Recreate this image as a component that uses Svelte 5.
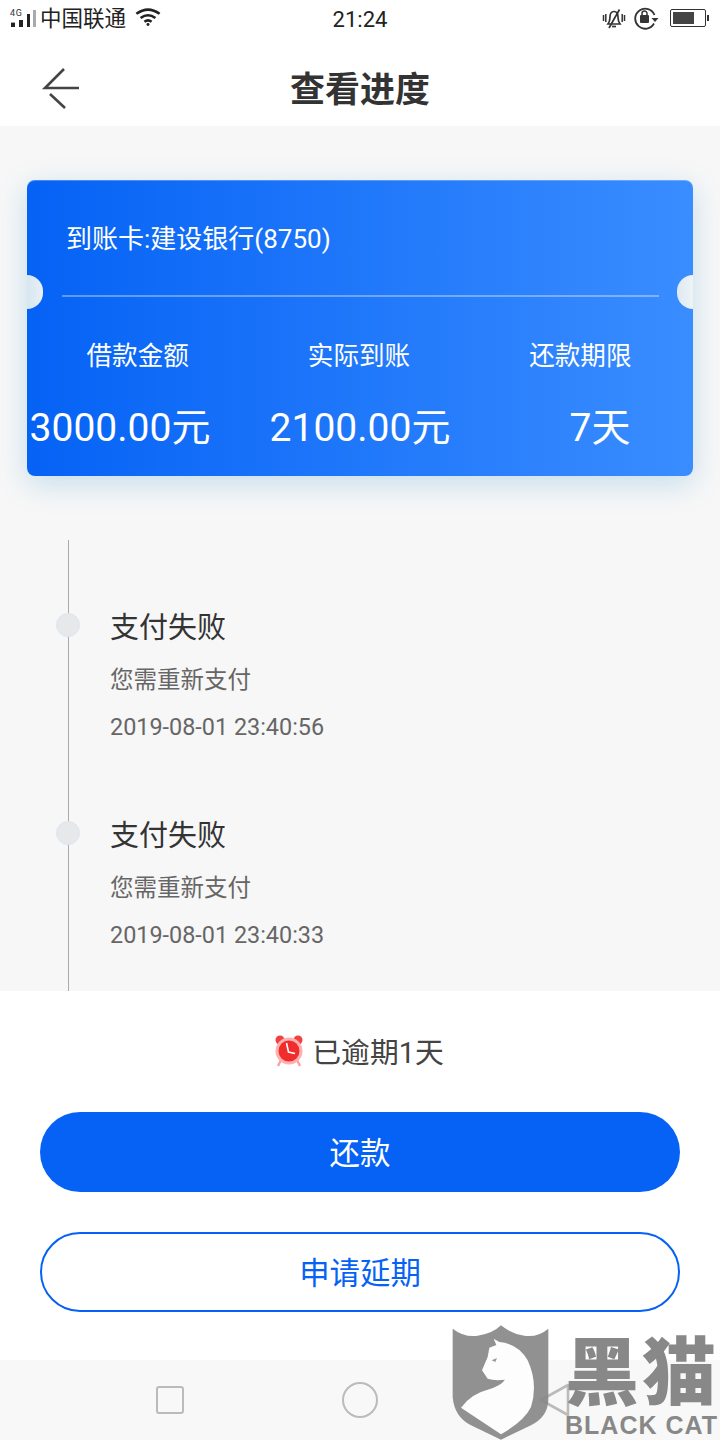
<script lang="ts">
	const stats = [
		{ label: '借款金额', value: '3000.00元' },
		{ label: '实际到账', value: '2100.00元' },
		{ label: '还款期限', value: '7天' }
	];
	const records = [
		{ title: '支付失败', note: '您需重新支付', time: '2019-08-01 23:40:56' },
		{ title: '支付失败', note: '您需重新支付', time: '2019-08-01 23:40:33' }
	];
</script>

<div class="page">
	<div class="status-bar">
		<div class="status-left">
			<svg class="signal" width="30" height="24" viewBox="0 0 30 24">
				<text x="0" y="9" font-size="9" letter-spacing="0.8" font-family="Roboto, sans-serif" fill="#333">4G</text>
				<rect x="1" y="15.6" width="4" height="4.4" fill="#222" />
				<rect x="9" y="13" width="4" height="7" fill="#222" />
				<rect x="17" y="7" width="3" height="13" fill="#222" />
				<rect x="23" y="3" width="3" height="17" fill="#aaa" />
			</svg>
			<span class="carrier">中国联通</span>
			<svg class="wifi" width="26" height="19" viewBox="0 0 24 18" fill="none" stroke="#222" stroke-width="2.5">
				<path d="M1 5.5 Q12 -2.5 23 5.5" />
				<path d="M5 9.5 Q12 4.2 19 9.5" />
				<path d="M8.6 13 Q12 10.6 15.4 13" />
				<circle cx="12" cy="15.6" r="1.4" fill="#222" stroke="none" />
			</svg>
		</div>
		<span class="clock">21:24</span>
		<div class="status-right">
			<svg width="24" height="22" viewBox="0 0 24 22" fill="none" stroke="#333" stroke-width="1.7">
				<path d="M6 16 Q8 13 8 9 Q8 3.5 12 3.5 Q16 3.5 16 9 Q16 13 18 16 Z" />
				<path d="M10 18.5 H14" />
				<path d="M17.5 1.5 L7 20" />
				<path d="M1.5 7 V13 M3.8 6 V14 M20.2 6 V14 M22.5 7 V13" stroke-width="1.5" />
			</svg>
			<svg width="26" height="24" viewBox="0 0 26 24" fill="none">
				<path d="M20.5 8 A10 10 0 1 0 20 16.5" stroke="#333" stroke-width="1.8" />
				<path d="M17.5 11 H24.5 L21 15 Z" fill="#333" />
				<rect x="6" y="8" width="9" height="8" rx="1" fill="#333" />
				<path d="M8 8 V6.5 A2.5 2.5 0 0 1 13 6.5 V8" stroke="#333" stroke-width="1.5" />
			</svg>
			<div class="battery">
				<div class="battery-shell"><div class="battery-fill"></div></div>
				<div class="battery-nub"></div>
			</div>
		</div>
	</div>

	<header class="top-bar">
		<svg class="back" width="40" height="44" viewBox="0 0 40 44" fill="none" stroke="#444" stroke-width="2.6">
			<path d="M23 2 L4 21 H38" />
			<path d="M9 27 L24 41" />
		</svg>
		<h1>查看进度</h1>
	</header>

	<main class="content">
		<section class="card">
			<div class="notch notch-left"></div>
			<div class="notch notch-right"></div>
			<div class="card-top">到账卡:建设银行(8750)</div>
			<div class="card-line"></div>
			<div class="label-row">
				{#each stats as s}
					<span>{s.label}</span>
				{/each}
			</div>
			<div class="value-row">
				{#each stats as s}
					<span>{s.value}</span>
				{/each}
			</div>
		</section>

		<section class="timeline">
			{#each records as r}
				<div class="record">
					<div class="dot"></div>
					<div class="record-title">{r.title}</div>
					<div class="record-note">{r.note}</div>
					<div class="record-time">{r.time}</div>
				</div>
			{/each}
		</section>
	</main>

	<footer class="actions">
		<div class="overdue">
			<svg width="30" height="32" viewBox="0 0 30 32">
				<circle cx="6" cy="5" r="4.5" fill="#f04040" />
				<circle cx="24" cy="5" r="4.5" fill="#f04040" />
				<path d="M7 25 L4 31 M23 25 L26 31" stroke="#ffa0a0" stroke-width="2.4" />
				<circle cx="15" cy="16" r="13.5" fill="#ffb0b0" />
				<circle cx="15" cy="16" r="10.5" fill="#f02c2c" />
				<path d="M12.5 8 L14.5 17 L21 18.5" fill="none" stroke="#fff" stroke-width="1.6" />
			</svg>
			<span>已逾期1天</span>
		</div>
		<button class="btn btn-solid">还款</button>
		<button class="btn btn-line">申请延期</button>
	</footer>

	<nav class="nav-bar">
		<div class="nav-square"></div>
		<div class="nav-circle"></div>
		<svg width="34" height="38" viewBox="0 0 34 38" fill="none">
			<path d="M3 19 L30 4 V34 Z" stroke="#bbb" stroke-width="2.6" stroke-linejoin="round" />
		</svg>
	</nav>

	<div class="watermark">
		<svg class="wm-shield" width="100" height="116" viewBox="65 44 290 348">
			<path
				d="M65 55 Q100 82 140 76 Q185 70 210 45 Q240 70 280 76 Q320 82 352 55 L352 270 Q350 320 300 345 L210 388 L120 345 Q70 320 65 260 Z"
				fill="#888"
				fill-opacity="0.92"
			/>
			<path
				d="M188 85 L205 95 Q262 100 290 150 Q322 220 300 290 Q280 332 210 372 L90 292 Q120 250 170 238 Q210 226 222 208 Q190 212 170 205 L153 180 L170 140 L175 112 L196 104 Z"
				fill="#fdfdfd"
			/>
			<path d="M182 150 L198 143 L193 155 Z" fill="#999" />
		</svg>
		<div class="wm-text">
			<div class="wm-cn">黑猫</div>
			<div class="wm-en">BLACK CAT</div>
		</div>
	</div>
</div>

<style>
	:global(body) {
		margin: 0;
		background: #fff;
	}

	.page {
		position: relative;
		width: 720px;
		height: 1440px;
		overflow: hidden;
		display: flex;
		flex-direction: column;
		font-family: Roboto, 'Noto Sans CJK SC', sans-serif;
		color: #333;
	}

	.status-bar {
		height: 38px;
		display: grid;
		grid-template-columns: 1fr auto 1fr;
		align-items: center;
		flex-shrink: 0;
	}

	.status-left {
		display: flex;
		align-items: center;
		padding-left: 10px;
	}

	.carrier {
		font-size: 21.5px;
		line-height: 38px;
		color: #222;
	}

	.wifi {
		margin-left: 9px;
		margin-top: -3px;
	}

	.clock {
		font-size: 22px;
		color: #222;
	}

	.status-right {
		display: flex;
		align-items: center;
		justify-content: flex-end;
		padding-right: 11px;
		gap: 8px;
	}

	.battery {
		display: flex;
		align-items: center;
		margin-left: 2px;
		margin-top: -2px;
	}

	.battery-shell {
		width: 36px;
		height: 18px;
		box-sizing: border-box;
		border: 1.5px solid #333;
		border-radius: 2px;
		padding: 2px;
	}

	.battery-fill {
		width: 21px;
		height: 100%;
		background: #444;
	}

	.battery-nub {
		width: 2px;
		height: 6px;
		background: #333;
		margin-left: 1px;
	}

	.top-bar {
		height: 88px;
		flex-shrink: 0;
		background: #fff;
		display: flex;
		align-items: center;
		justify-content: center;
		position: relative;
	}

	.back {
		position: absolute;
		left: 41px;
		top: 29px;
	}

	h1 {
		margin: 16px 0 0;
		font-size: 35px;
		font-weight: 700;
		color: #333;
		line-height: 1;
	}

	.content {
		flex: 1;
		min-height: 0;
		background: #f7f7f7;
		padding-top: 54px;
		display: flex;
		flex-direction: column;
		overflow: hidden;
	}

	.card {
		position: relative;
		margin: 0 27px;
		height: 296px;
		box-sizing: border-box;
		border-radius: 8px;
		background: linear-gradient(90deg, #0562f5 0%, #3a8dff 100%);
		box-shadow: inset 0 1px rgba(255, 255, 255, 0.25), 0 8px 30px rgba(20, 130, 200, 0.22);
		color: #fff;
		flex-shrink: 0;
	}

	.notch {
		position: absolute;
		top: 95px;
		width: 16px;
		height: 34px;
	}

	.notch-left {
		left: 0;
		border-radius: 0 17px 17px 0;
		background: linear-gradient(90deg, #d6e6f2, #e9f0f5);
	}

	.notch-right {
		right: 0;
		border-radius: 17px 0 0 17px;
		background: linear-gradient(90deg, #dceaf3, #eff3f5);
	}

	.card-top {
		height: 115px;
		box-sizing: border-box;
		padding: 40px 39px 0;
		font-size: 26px;
		line-height: 38px;
	}

	.card-line {
		height: 2px;
		margin: 0 34px 0 35px;
		background: rgba(255, 255, 255, 0.35);
	}

	.label-row {
		display: grid;
		grid-template-columns: repeat(3, 1fr);
		margin: 40px 2px 0 0;
		font-size: 25.6px;
		line-height: 38px;
		text-align: center;
	}

	.value-row {
		display: grid;
		grid-template-columns: repeat(3, 1fr);
		margin: 28px -27px 0;
		font-size: 39px;
		line-height: 50px;
		text-align: center;
	}

	.timeline {
		flex: 1;
		margin: 64px 0 0 68px;
		border-left: 1px solid #aaa;
	}

	.record {
		position: relative;
		padding: 68px 0 0 41px;
	}

	.record + .record {
		padding-top: 72px;
	}

	.dot {
		position: absolute;
		left: -13px;
		top: 73px;
		width: 24px;
		height: 24px;
		box-sizing: border-box;
		border-radius: 50%;
		background: #e7e8ea;
		border: 1px solid #dce5f2;
	}

	.record + .record .dot {
		top: 77px;
	}

	.record-title {
		font-size: 29px;
		line-height: 40px;
		color: #333;
	}

	.record-note {
		margin-top: 15px;
		font-size: 23.5px;
		line-height: 34px;
		color: #666;
	}

	.record-time {
		margin-top: 13px;
		font-size: 23.4px;
		line-height: 34px;
		color: #666;
	}

	.actions {
		height: 369px;
		flex-shrink: 0;
		background: #fff;
		box-sizing: border-box;
		padding: 40px 40px 0;
		display: flex;
		flex-direction: column;
	}

	.overdue {
		display: flex;
		align-items: center;
		justify-content: center;
		gap: 8px;
		height: 38px;
		font-size: 28.8px;
		color: #444;
		padding-right: 2px;
	}

	.overdue svg {
		margin-top: 2px;
	}

	.btn {
		width: 640px;
		height: 80px;
		box-sizing: border-box;
		border-radius: 40px;
		font-family: inherit;
		font-size: 30.4px;
		padding: 0 0 3px;
	}

	.btn-solid {
		margin-top: 43px;
		background: #0562f5;
		border: none;
		color: #fff;
	}

	.btn-line {
		margin-top: 40px;
		background: #fff;
		border: 2px solid #0562f5;
		color: #0562f5;
	}

	.nav-bar {
		height: 80px;
		flex-shrink: 0;
		background: #f8f8f8;
		display: flex;
		align-items: center;
		padding-left: 156px;
	}

	.nav-square {
		width: 28px;
		height: 28px;
		box-sizing: border-box;
		border: 2px solid #bbb;
		border-radius: 3px;
	}

	.nav-circle {
		width: 36px;
		height: 36px;
		box-sizing: border-box;
		border: 2px solid #bbb;
		border-radius: 50%;
		margin-left: 158px;
	}

	.nav-bar svg {
		margin-left: 160px;
	}

	.watermark {
		position: absolute;
		left: 451px;
		top: 1325px;
		display: flex;
		color: #888;
	}

	.wm-text {
		margin-left: 14px;
		width: 156px;
	}

	.wm-cn {
		font-family: 'Noto Sans CJK SC', sans-serif;
		font-weight: 900;
		font-size: 74px;
		letter-spacing: 3px;
		line-height: 84px;
		white-space: nowrap;
	}

	.wm-en {
		font-family: 'Liberation Sans', sans-serif;
		font-weight: 700;
		font-size: 25px;
		line-height: 24px;
		white-space: nowrap;
		letter-spacing: 1px;
		margin-top: 4px;
	}
</style>
